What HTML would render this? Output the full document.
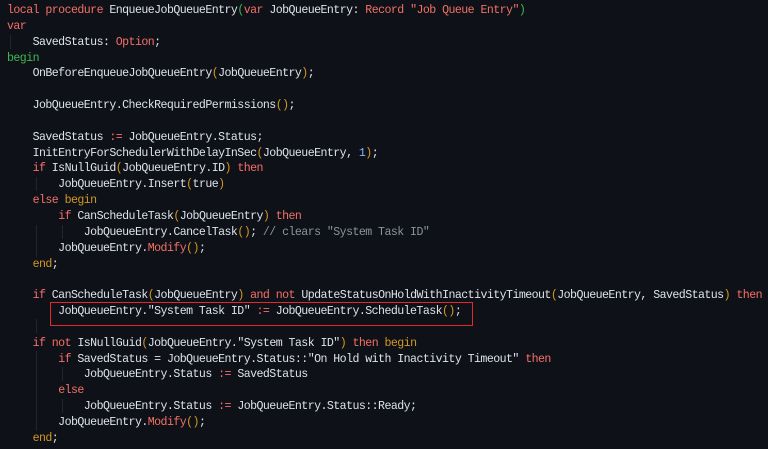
<!DOCTYPE html>
<html><head><style>
html,body{margin:0;padding:0;background:#0e1117;width:768px;height:449px;overflow:hidden}
#c{position:absolute;left:7px;top:3px;font-family:"Liberation Mono",monospace;font-size:11.6px;letter-spacing:-0.56px;line-height:15.85px;color:#dde3ea;white-space:pre}
.k{color:#f47067}.g{color:#3fb950}.y{color:#d29922}.n{color:#79b8ff}.c{color:#8b949e}
#box{position:absolute;left:50px;top:302px;width:421px;height:22px;border:1.5px solid #e5262a}
.ig{position:absolute;width:1px;background:#21262d}
</style></head><body>
<div class="ig" style="left:10px;top:35px;height:14px"></div>
<div class="ig" style="left:36px;top:177px;height:14px"></div>
<div class="ig" style="left:36px;top:225px;height:32px"></div>
<div class="ig" style="left:62px;top:225px;height:14px"></div>
<div class="ig" style="left:36px;top:319px;height:14px"></div>
<div class="ig" style="left:36px;top:351px;height:80px"></div>
<div class="ig" style="left:62px;top:367px;height:14px"></div>
<div class="ig" style="left:62px;top:399px;height:14px"></div>
<div id="c"><span class="k">local procedure</span> EnqueueJobQueueEntry<span class="g">(</span><span class="k">var</span> JobQueueEntry: <span class="k">Record</span> <span class="k">"Job Queue Entry"</span><span class="g">)</span>
<span class="k">var</span>
    SavedStatus: <span class="k">Option</span>;
<span class="g">begin</span>
    OnBeforeEnqueueJobQueueEntry<span class="y">(</span>JobQueueEntry<span class="y">)</span>;

    JobQueueEntry.CheckRequiredPermissions<span class="y">()</span>;

    SavedStatus <span class="k">:=</span> JobQueueEntry.Status;
    InitEntryForSchedulerWithDelayInSec<span class="y">(</span>JobQueueEntry, <span class="n">1</span><span class="y">)</span>;
    <span class="k">if</span> IsNullGuid<span class="y">(</span>JobQueueEntry.ID<span class="y">)</span> <span class="k">then</span>
        JobQueueEntry.Insert<span class="y">(</span>true<span class="y">)</span>
    <span class="k">else</span> <span class="y">begin</span>
        <span class="k">if</span> CanScheduleTask<span class="y">(</span>JobQueueEntry<span class="y">)</span> <span class="k">then</span>
            JobQueueEntry.CancelTask<span class="y">()</span>; <span class="c">// clears "System Task ID"</span>
        JobQueueEntry.<span class="k">Modify</span><span class="y">()</span>;
    <span class="y">end</span>;

    <span class="k">if</span> CanScheduleTask<span class="y">(</span>JobQueueEntry<span class="y">)</span> <span class="k">and not</span> UpdateStatusOnHoldWithInactivityTimeout<span class="y">(</span>JobQueueEntry, SavedStatus<span class="y">)</span> <span class="k">then</span>
        JobQueueEntry."System Task ID" <span class="k">:=</span> JobQueueEntry.ScheduleTask<span class="y">()</span>;

    <span class="k">if not</span> IsNullGuid<span class="y">(</span>JobQueueEntry."System Task ID"<span class="y">)</span> <span class="k">then</span> <span class="y">begin</span>
        <span class="k">if</span> SavedStatus = JobQueueEntry.Status::"On Hold with Inactivity Timeout" <span class="k">then</span>
            JobQueueEntry.Status <span class="k">:=</span> SavedStatus
        <span class="k">else</span>
            JobQueueEntry.Status <span class="k">:=</span> JobQueueEntry.Status::Ready;
        JobQueueEntry.<span class="k">Modify</span><span class="y">()</span>;
    <span class="y">end</span>;</div>
<div id="box"></div>
</body></html>
